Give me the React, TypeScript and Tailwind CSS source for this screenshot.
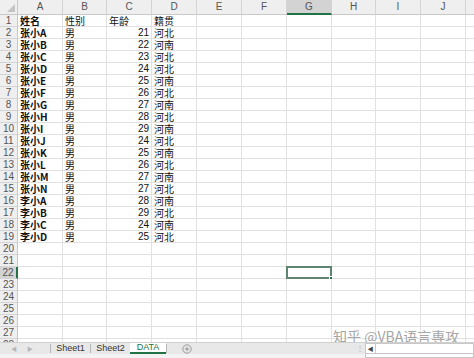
import React from "react";

const cols = [
  { key: "A", w: "w-[45px]" },
  { key: "B", w: "w-[44px]" },
  { key: "C", w: "w-[45px]" },
  { key: "D", w: "w-[45px]" },
  { key: "E", w: "w-[45px]" },
  { key: "F", w: "w-[45px]" },
  { key: "G", w: "w-[45px]" },
  { key: "H", w: "w-[44px]" },
  { key: "I", w: "w-[45px]" },
  { key: "J", w: "w-[45px]" },
  { key: "K", w: "w-[45px]" },
];

const people: [string, number, string][] = [
  ["张小A", 21, "河北"],
  ["张小B", 22, "河南"],
  ["张小C", 23, "河北"],
  ["张小D", 24, "河北"],
  ["张小E", 25, "河南"],
  ["张小F", 26, "河北"],
  ["张小G", 27, "河南"],
  ["张小H", 28, "河北"],
  ["张小I", 29, "河南"],
  ["张小J", 24, "河北"],
  ["张小K", 25, "河南"],
  ["张小L", 26, "河北"],
  ["张小M", 27, "河南"],
  ["张小N", 27, "河北"],
  ["李小A", 28, "河南"],
  ["李小B", 29, "河北"],
  ["李小C", 24, "河南"],
  ["李小D", 25, "河北"],
];

const font = "font-['Noto_Sans_CJK_SC','Noto_Sans',sans-serif]";
const latin = "font-['Liberation_Sans','Noto_Sans_CJK_SC',sans-serif]";

function Row({ n }: { n: number }) {
  const p = n >= 2 && n <= 19 ? people[n - 2] : null;
  const active = n === 22;
  const cell = (i: number): React.ReactNode => {
    if (n === 1) return ["姓名", "性别", "年龄", "籍贯"][i] ?? null;
    if (!p) return null;
    if (i === 0) return p[0];
    if (i === 1) return "男";
    if (i === 2) return <span className={latin}>{p[1]}</span>;
    if (i === 3) return p[2];
    return null;
  };
  return (
    <div className="flex h-[12px] shrink-0">
      <div
        className={`w-[18px] shrink-0 flex items-center justify-center text-[10px] leading-[12px] text-[#555] border-b border-[#d4d4d4] ${latin} ${
          active ? "bg-[#d3d3d3] border-r-2 border-r-[#217346]" : "bg-[#efefef] border-r border-r-[#c8c8c8]"
        }`}
      >
        {n}
      </div>
      {cols.map((c, i) => (
        <div
          key={c.key}
          className={`${c.w} shrink-0 relative border-r border-b border-[#e1e1e1] flex items-center text-[10px] leading-[12px] text-[#111] whitespace-nowrap ${
            i === 2 && n > 1 ? "justify-end pr-[2px]" : "pl-[2px]"
          } ${i === 0 ? "font-bold" : ""}`}
        >
          {cell(i)}
          {active && c.key === "G" && (
            <div className="absolute -left-[1px] -top-[1px] w-[46px] h-[13px] border-2 border-[#5d8570]">
              <div className="absolute -right-[3px] -bottom-[3px] w-[4px] h-[4px] bg-[#217346] border border-white" />
            </div>
          )}
        </div>
      ))}
    </div>
  );
}

export default function App() {
  const rows = Array.from({ length: 28 }, (_, i) => i + 1);
  return (
    <div className={`w-[474px] h-[358px] overflow-hidden bg-white flex flex-col ${font}`}>
      <div className="relative h-[342px] overflow-hidden flex flex-col">
        {/* column headers */}
        <div className="flex h-[15px] shrink-0">
          <div className="w-[18px] shrink-0 bg-[#efefef] border-r border-b border-[#c8c8c8] relative">
            <svg width="8" height="8" className="absolute right-[2px] bottom-[2px]">
              <polygon points="8,0 8,8 0,8" fill="#c4c4c4" />
            </svg>
          </div>
          {cols.map((c) => (
            <div
              key={c.key}
              className={`${c.w} shrink-0 flex items-center justify-center text-[10px] leading-none text-[#555] border-r border-[#d4d4d4] ${latin} ${
                c.key === "G" ? "bg-[#d3d3d3] border-b-2 border-b-[#217346]" : "bg-[#efefef] border-b border-b-[#c8c8c8]"
              }`}
            >
              {c.key}
            </div>
          ))}
        </div>
        {rows.map((n) => (
          <Row key={n} n={n} />
        ))}
        <div className="absolute left-[333px] top-[329px] text-[14px] leading-none text-[#8c8c8c]/80 whitespace-nowrap [text-shadow:0_0_2px_white]">
          知乎 @VBA语言専攻
        </div>
      </div>

      {/* sheet tabs */}
      <div className={`flex h-[12px] shrink-0 bg-[#e8e8e8] border-t border-[#d0d0d0] text-[9px] leading-none ${latin}`}>
        <div className="w-[50px] flex items-center pl-[11px] gap-[10px] text-[6px] text-[#b8b8b8]">
          <span>◀</span>
          <span>▶</span>
        </div>
        <div className="w-[1px] my-[1px] bg-[#b8b8b8]" />
        <div className="w-[39px] flex items-center justify-center text-[#333]">Sheet1</div>
        <div className="w-[1px] my-[1px] bg-[#b8b8b8]" />
        <div className="w-[39px] flex items-center justify-center text-[#333]">Sheet2</div>
        <div className="w-[36px] flex items-center justify-center bg-white text-[#217346] border-b-2 border-[#217346]">
          DATA
        </div>
        <div className="w-[1px] my-[1px] bg-[#b8b8b8]" />
        <div className="w-[40px] flex items-center justify-center">
          <svg width="10" height="10" viewBox="0 0 12 12">
            <circle cx="6" cy="6" r="5" fill="none" stroke="#8a8a8a" strokeWidth="1" />
            <path d="M6 3.5v5M3.5 6h5" stroke="#8a8a8a" strokeWidth="1" />
          </svg>
        </div>
        <div className="flex-1" />
        <div className="w-[10px] flex items-center justify-center text-[#aaa] text-[8px]">⋮</div>
        <div className="w-[109px] h-[11px] bg-white border border-[#c8c8c8] flex items-center">
          <div className="w-[10px] h-full flex items-center justify-center border-r border-[#c8c8c8] text-[6px] text-[#444]">◀</div>
        </div>
      </div>
      <div className="flex-1 bg-[#f3f3f3] flex justify-end">
        <div className="w-[109px] bg-white border-x border-b border-[#c8c8c8]" />
      </div>
    </div>
  );
}
